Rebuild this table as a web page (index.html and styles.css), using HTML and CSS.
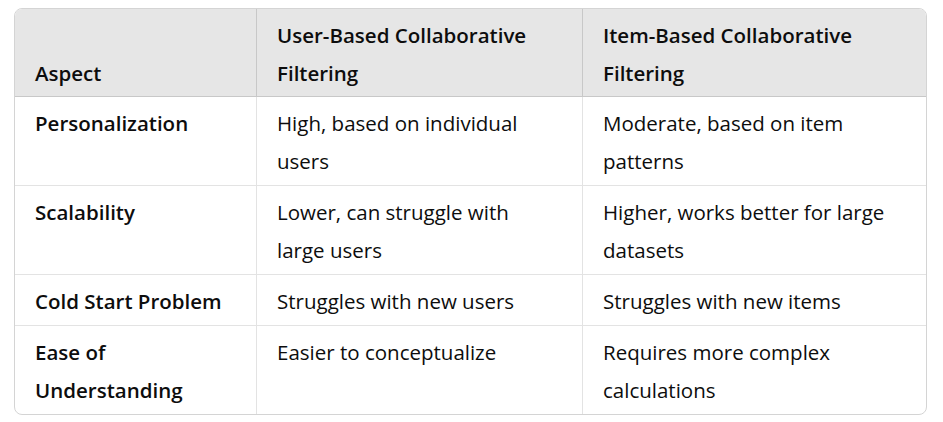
FILE: index.html
```html
<!DOCTYPE html>
<html>
<head>
<meta charset="utf-8">
<link rel="stylesheet" href="styles.css">
</head>
<body>
<div class="wrap">
<table class="cmp">
  <colgroup>
    <col class="c1"><col class="c2"><col class="c3">
  </colgroup>
  <thead>
    <tr>
      <th>Aspect</th>
      <th>User-Based Collaborative Filtering</th>
      <th>Item-Based Collaborative Filtering</th>
    </tr>
  </thead>
  <tbody>
    <tr>
      <td class="key">Personalization</td>
      <td>High, based on individual users</td>
      <td>Moderate, based on item patterns</td>
    </tr>
    <tr>
      <td class="key">Scalability</td>
      <td>Lower, can struggle with large users</td>
      <td>Higher, works better for large datasets</td>
    </tr>
    <tr>
      <td class="key">Cold Start Problem</td>
      <td>Struggles with new users</td>
      <td>Struggles with new items</td>
    </tr>
    <tr>
      <td class="key">Ease of Understanding</td>
      <td>Easier to conceptualize</td>
      <td>Requires more complex calculations</td>
    </tr>
  </tbody>
</table>
</div>
</body>
</html>
```
FILE: styles.css
```css
html, body {
  margin: 0;
  padding: 0;
  background: #ffffff;
}
body {
  font-family: "Open Sans", "Noto Sans", sans-serif;
  color: #0d0d0d;
  font-size: 20.5px;
}
.wrap {
  padding: 8px 0 0 14px;
}
.cmp {
  border-collapse: separate;
  border-spacing: 0;
  width: 913px;
  table-layout: fixed;
  border: 1px solid #d4d4d4;
  border-radius: 8px;
  overflow: hidden;
}
.c1 { width: 241px; }
.c2 { width: 326px; }
.c3 { width: 344px; }
th, td {
  text-align: left;
  line-height: 38px;
  padding: 7px 22px 5px 20px;
}
th {
  background: #e6e6e6;
  font-weight: 600;
  vertical-align: bottom;
  border-bottom: 1px solid #c8c8c8;
  padding-bottom: 4px;
}
th + th {
  border-left: 1px solid #c8c8c8;
}
td {
  vertical-align: top;
  font-weight: 400;
  border-top: 1px solid #e3e3e3;
}
tbody tr:first-child td {
  border-top: none;
}
td + td {
  border-left: 1px solid #e3e3e3;
}
td.key {
  font-weight: 600;
}
```
